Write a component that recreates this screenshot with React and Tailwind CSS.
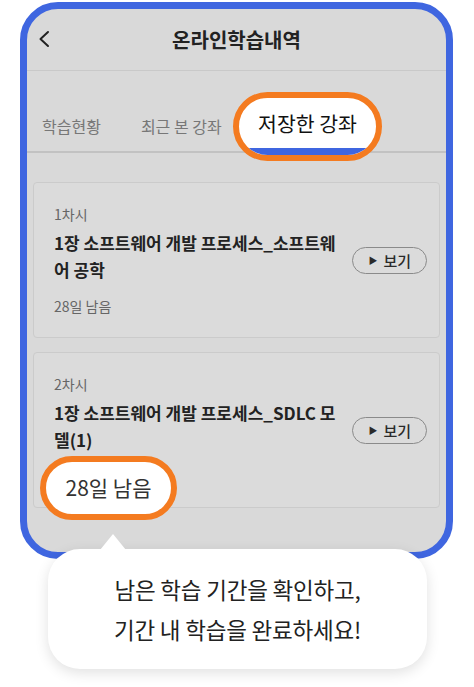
import React from 'react';

const font = { fontFamily: '"Noto Sans CJK KR", "Noto Sans", sans-serif' };

function PlayButton() {
  return (
    <button className="flex items-center gap-[6px] h-[27px] px-[15px] rounded-full border-[1.5px] border-[#8a8a8a] text-[15px] font-medium text-[#2a2a2a] leading-none">
      <span className="text-[9px]">▶</span>
      <span>보기</span>
    </button>
  );
}

function LessonCard({ label, title, remain, highlight }) {
  return (
    <div className="relative mx-[6px] bg-[#dbdbdb] border border-[#cbcbcb] rounded-[4px] pl-[20px] pr-[12px] pt-[22px] pb-[22px] flex items-center justify-between">
      <div className="w-[292px]">
        <div className="text-[14px] leading-[18px] text-[#666]">{label}</div>
        <div className="mt-[6px] text-[17px] leading-[27px] font-bold text-[#222]">{title}</div>
        <div className="mt-[14px] text-[14px] leading-[18px] text-[#666]">{remain}</div>
      </div>
      <PlayButton />
      {highlight && (
        <div className="absolute left-[6px] top-[103px] w-[137px] h-[64px] rounded-full border-[6px] border-[#f47b20] bg-white flex items-center justify-center text-[21px] text-[#333]">
          28일 남음
        </div>
      )}
    </div>
  );
}

export default function App() {
  return (
    <div className="w-[474px] h-[687px] bg-white pt-[2px]" style={font}>
      {/* 폰 화면 프레임 */}
      <div className="ml-[20px] w-[433px] h-[557px] border-[7px] border-[#3f66e0] rounded-[38px] bg-[#d9d9d9] overflow-hidden">
        {/* 헤더 */}
        <div className="relative h-[62px] flex items-center justify-center border-b border-[#c9c9c9]">
          <svg className="absolute left-[10px] top-[21px]" width="14" height="18" viewBox="0 0 14 18" fill="none">
            <path d="M11 2 L3.5 9 L11 16" stroke="#222" strokeWidth="2" strokeLinecap="round" strokeLinejoin="round" />
          </svg>
          <h1 className="text-[20px] font-bold text-[#222]">온라인학습내역</h1>
        </div>

        {/* 탭 */}
        <div className="relative h-[82px] border-b-2 border-[#c2c2c2] flex items-end pb-[13px] pl-[15px] gap-[40px] text-[16px] text-[#777]">
          <span>학습현황</span>
          <span>최근 본 강좌</span>
          <div className="absolute left-[206px] top-[21px] w-[149px] h-[69px] rounded-full border-[6px] border-[#f47b20] bg-white overflow-hidden flex items-center justify-center">
            <span className="text-[20.5px] text-[#111] pb-[6px]">저장한 강좌</span>
            <div className="absolute left-0 right-0 bottom-0 h-[7px] bg-[#3f66e0]" />
          </div>
        </div>

        {/* 강좌 목록 */}
        <div className="pt-[29px] flex flex-col gap-[14px]">
          <LessonCard label="1차시" title="1장 소프트웨어 개발 프로세스_소프트웨어 공학" remain="28일 남음" />
          <LessonCard label="2차시" title="1장 소프트웨어 개발 프로세스_SDLC 모델(1)" remain="28일 남음" highlight />
        </div>
      </div>

      {/* 말풍선 */}
      <div className="relative z-10 -mt-[10px] ml-[48px] w-[379px] h-[120px] bg-white rounded-[32px] shadow-[0_4px_14px_rgba(0,0,0,0.12)] flex flex-col items-center justify-center text-[22.5px] leading-[40px] tracking-[-0.2px] text-[#222] font-normal">
        <svg className="absolute left-[52px] -top-[15px]" width="26" height="16" viewBox="0 0 26 16">
          <path d="M0 16 L13 0 L26 16 Z" fill="#fff" />
        </svg>
        <span>남은 학습 기간을 확인하고,</span>
        <span>기간 내 학습을 완료하세요!</span>
      </div>
    </div>
  );
}
